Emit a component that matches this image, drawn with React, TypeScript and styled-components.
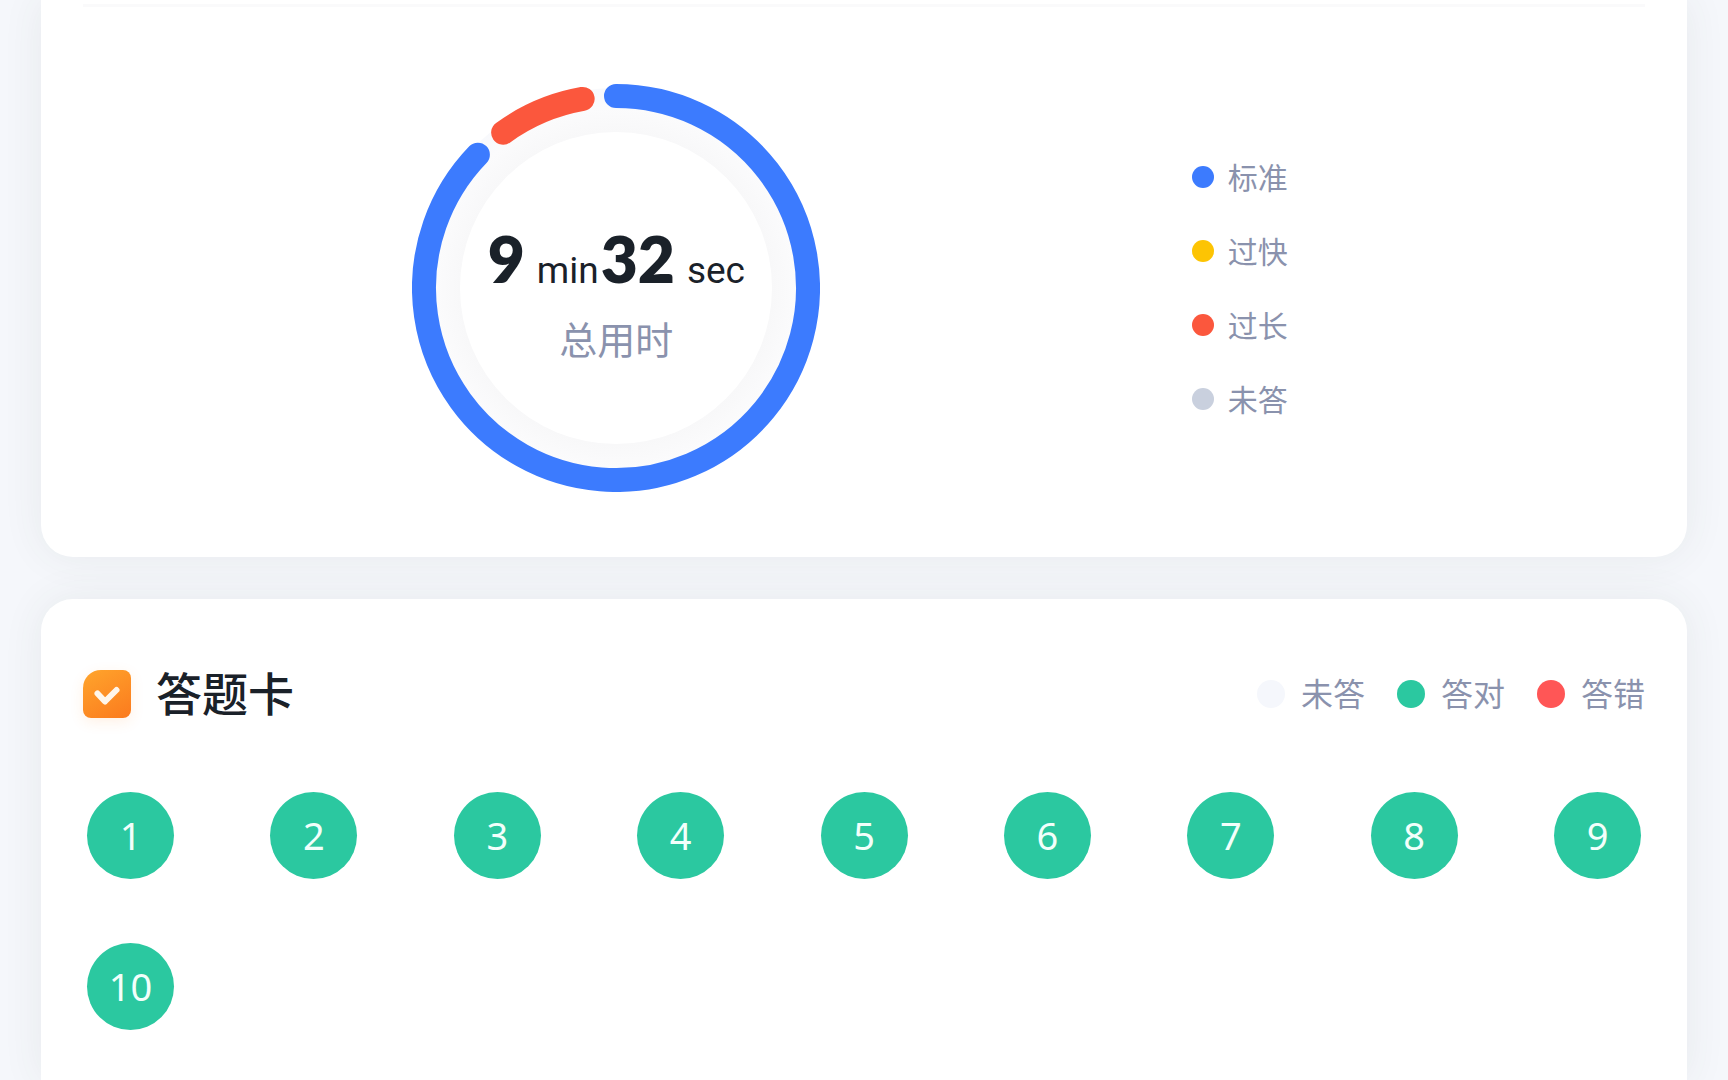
import React from "react";
import styled, { createGlobalStyle } from "styled-components";

const GlobalStyle = createGlobalStyle`
  *, *::before, *::after { box-sizing: border-box; }
  body {
    margin: 0;
    background: #f5f7fb;
    font-family: Lato, "Noto Sans CJK SC", sans-serif;
    color: #1a2129;
  }
`;

const Page = styled.main`
  display: flex;
  flex-direction: column;
  gap: 42px;
  min-height: 100vh;
  padding: 0 41px;
`;

const Card = styled.section<{ $edge: "top" | "bottom" }>`
  background: #fff;
  border-radius: ${(p) => (p.$edge === "top" ? "0 0 32px 32px" : "32px 32px 0 0")};
  box-shadow: 0 0 40px rgba(60, 80, 70, 0.08);
`;

const TimeCard = styled(Card)`
  padding: 4px 0 65px;
`;

const AnswerCard = styled(Card)`
  flex: 1;
  padding: 63px 42px 48px;
`;

const Divider = styled.hr`
  height: 3px;
  margin: 0 42px 77px;
  border: 0;
  background: #fafafb;
`;

const TimeBody = styled.div`
  display: flex;
  align-items: center;
  justify-content: space-evenly;
`;

const RingBox = styled.div`
  display: grid;
  place-items: center;
  width: 408px;
  height: 408px;
  > * { grid-area: 1 / 1; }
`;

const RingText = styled.div`
  display: flex;
  flex-direction: column;
  align-items: center;
  gap: 8px;
  padding-top: 10px;
`;

const Total = styled.p`
  display: flex;
  align-items: baseline;
  margin: 0;
  line-height: 72px;
`;

const Figure = styled.strong`
  font-size: 64px;
  font-weight: 800;
`;

const Unit = styled.span`
  padding: 0 2px 0 12px;
  font-family: Roboto, sans-serif;
  font-size: 37px;
  &:last-child { padding-right: 0; }
`;

const Caption = styled.span`
  font-size: 38px;
  line-height: 48px;
  color: #8a92ad;
`;

const TimeLegend = styled.ul`
  display: flex;
  flex-direction: column;
  gap: 30px;
  margin: 0;
  padding: 0 28px 0 0;
  list-style: none;
`;

const AnswerLegend = styled(TimeLegend)`
  flex-direction: row;
  gap: 32px;
  padding: 0;
`;

const LegendItem = styled.li<{ $large?: boolean }>`
  display: flex;
  align-items: center;
  gap: ${(p) => (p.$large ? 16 : 14)}px;
  font-size: ${(p) => (p.$large ? 32 : 30)}px;
  line-height: 44px;
  color: #8a92ad;
`;

const Dot = styled.i<{ $color: string; $size: number }>`
  width: ${(p) => p.$size}px;
  height: ${(p) => p.$size}px;
  border-radius: 50%;
  background: ${(p) => p.$color};
`;

const Header = styled.header`
  display: flex;
  align-items: center;
  justify-content: space-between;
  height: 64px;
`;

const Heading = styled.h2`
  display: flex;
  align-items: center;
  gap: 25px;
  margin: 0;
  font-size: 46px;
  font-weight: 500;
  line-height: 64px;
`;

const CheckBadge = styled.span`
  display: grid;
  place-items: center;
  width: 48px;
  height: 48px;
  border-radius: 18px 8px 8px 8px;
  background: linear-gradient(150deg, #ffa52c, #fb7a1e);
  box-shadow: 0 4px 14px rgba(255, 140, 40, 0.12);
`;

const AnswerGrid = styled.div`
  display: grid;
  grid-template-columns: repeat(9, 87px);
  justify-content: space-between;
  row-gap: 64px;
  padding: 66px 4px 0;
`;

const AnswerButton = styled.button`
  width: 87px;
  height: 87px;
  padding: 0;
  border: 0;
  border-radius: 50%;
  background: #2bc8a0;
  color: #f2fffb;
  font-family: "Noto Sans", sans-serif;
  font-size: 38px;
  line-height: 87px;
  cursor: pointer;
`;

const CENTER = 204;
const RADIUS = 192;

function arc(from: number, to: number) {
  const point = (deg: number) => {
    const a = (deg * Math.PI) / 180;
    return `${CENTER + RADIUS * Math.sin(a)} ${CENTER - RADIUS * Math.cos(a)}`;
  };
  return `M${point(from)} A${RADIUS} ${RADIUS} 0 ${to - from > 180 ? 1 : 0} 1 ${point(to)}`;
}

const segments = [
  { color: "#3c7bfe", from: 0, to: 314 },
  { color: "#fb573d", from: 324, to: 350 },
];

const paces = [
  { label: "标准", color: "#3c7bfe" },
  { label: "过快", color: "#fdc403" },
  { label: "过长", color: "#fb573d" },
  { label: "未答", color: "#c9d0de" },
];

const results = [
  { label: "未答", color: "#f5f7fc" },
  { label: "答对", color: "#2bc8a0" },
  { label: "答错", color: "#ff5656" },
];

const questions = Array.from({ length: 10 }, (_, i) => i + 1);

function TimeRing() {
  return (
    <RingBox>
      <svg width="408" height="408" viewBox="0 0 408 408" fill="none" aria-hidden="true">
        <defs>
          <radialGradient id="track" cx={CENTER} cy={CENTER} r="200" gradientUnits="userSpaceOnUse">
            <stop offset="0.78" stopColor="#f8f8f9" />
            <stop offset="0.9" stopColor="#fbfbfc" />
            <stop offset="1" stopColor="#f8f9fc" />
          </radialGradient>
        </defs>
        <circle cx={CENTER} cy={CENTER} r="200" fill="url(#track)" />
        <circle cx={CENTER} cy={CENTER} r="156" fill="#fff" />
        {segments.map((s) => (
          <path key={s.color} d={arc(s.from, s.to)} stroke={s.color} strokeWidth="24" strokeLinecap="round" />
        ))}
      </svg>
      <RingText>
        <Total>
          <Figure>9</Figure>
          <Unit>min</Unit>
          <Figure>32</Figure>
          <Unit>sec</Unit>
        </Total>
        <Caption>总用时</Caption>
      </RingText>
    </RingBox>
  );
}

export default function App() {
  return (
    <>
      <GlobalStyle />
      <Page>
        <TimeCard $edge="top">
          <Divider />
          <TimeBody>
            <TimeRing />
            <TimeLegend>
              {paces.map((p) => (
                <LegendItem key={p.label}>
                  <Dot $color={p.color} $size={22} />
                  {p.label}
                </LegendItem>
              ))}
            </TimeLegend>
          </TimeBody>
        </TimeCard>
        <AnswerCard $edge="bottom">
          <Header>
            <Heading>
              <CheckBadge>
                <svg width="48" height="48" viewBox="0 0 48 48" fill="none" aria-hidden="true">
                  <path d="M14.5 23.5l7.5 8L33.5 20" stroke="#fff6ea" strokeWidth="6" strokeLinecap="round" strokeLinejoin="round" />
                </svg>
              </CheckBadge>
              答题卡
            </Heading>
            <AnswerLegend>
              {results.map((r) => (
                <LegendItem key={r.label} $large>
                  <Dot $color={r.color} $size={28} />
                  {r.label}
                </LegendItem>
              ))}
            </AnswerLegend>
          </Header>
          <AnswerGrid>
            {questions.map((n) => (
              <AnswerButton key={n} type="button">
                {n}
              </AnswerButton>
            ))}
          </AnswerGrid>
        </AnswerCard>
      </Page>
    </>
  );
}
